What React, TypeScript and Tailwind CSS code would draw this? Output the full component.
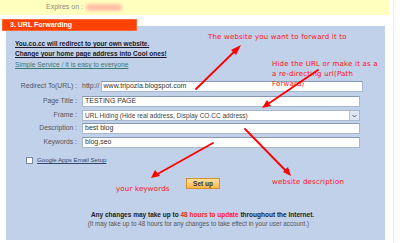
import React from "react";

const ann = "absolute text-[#ff1010] text-[7px] leading-[10px] whitespace-nowrap tracking-[0.2px]";

function Row({ label, children, mt }: { label: string; children: React.ReactNode; mt: string }) {
  return (
    <div className={`flex items-center h-[11px] ${mt}`}>
      <div className="w-[72px] text-right text-[6.8px] text-[#555] pr-[1px]">{label} :</div>
      <div className="ml-[4px] flex items-center">{children}</div>
    </div>
  );
}

function Field({ value, w }: { value: string; w: string }) {
  return (
    <div className={`h-[11px] ${w} bg-white border border-[#a9b7cc] border-t-[#8898b0] flex items-center px-[2px] text-[7px] text-[#333] overflow-hidden whitespace-nowrap`}>
      {value}
    </div>
  );
}

export default function App() {
  return (
    <div
      className="relative w-[400px] h-[243px] bg-white overflow-hidden"
      style={{ fontFamily: '"Liberation Sans", Arial, sans-serif' }}
    >
      <div className="w-[394px] h-[243px] border-r border-[#ececec]">
        {/* Expires bar */}
        <div className="w-[389px] h-[15px] bg-[#ffffbe] flex items-center">
          <span className="ml-[46px] text-[7px] text-[#8a8a8a]">Expires on :</span>
          <span className="ml-[3px] w-[36px] h-[7px] bg-[#ffc0a8] rounded-sm blur-[1.5px]" />
        </div>

        {/* Header */}
        <div className="relative z-10 mt-[4px] ml-[2px] w-[135px] h-[12px] -mb-[5px] bg-[#ff4200] border border-[#ff6a3a] flex items-center">
          <span className="ml-[7px] text-[7px] font-bold text-white">3. URL Forwarding</span>
        </div>

        {/* Blue panel */}
        <div className="relative ml-[6px] w-[379px] h-[214px] bg-[#c1d1ea]">
          <div className="pt-[13px] pl-[9px]">
            <div className="h-[10px] leading-[10px] text-[6.5px] font-bold text-[#1a1a2a] underline">
              You.co.cc will redirect to your own website.
            </div>
            <div className="h-[10px] leading-[10px] text-[6.5px] font-bold text-[#1a1a2a] underline">
              Change your home page address into Cool ones!
            </div>
            <div className="mt-[1px] h-[10px] leading-[10px] text-[6.7px] text-[#3a7a70] underline">
              Simple Service / It is easy to everyone
            </div>
          </div>

          <div>
            <Row label="Redirect To(URL)" mt="mt-[11px]">
              <span className="text-[7px] text-[#555] mr-[1px]">http://</span>
              <Field value="www.tripozia.blogspot.com" w="w-[262px]" />
            </Row>
            <Row label="Page Title" mt="mt-[4px]">
              <Field value="TESTING PAGE" w="w-[278px]" />
            </Row>
            <Row label="Frame" mt="mt-[3px]">
              <div className="h-[11px] w-[278px] bg-white border border-[#a9b7cc] flex items-center text-[6.5px] text-[#444] whitespace-nowrap overflow-hidden">
                <span className="flex-1 px-[2px]">URL Hiding (Hide real address, Display CO.CC address)</span>
                <span className="w-[10px] h-[9px] bg-[#dfe7f5] border-l border-[#b5c3da] flex items-center justify-center">
                  <svg width="5" height="4" viewBox="0 0 5 4">
                    <path d="M0.5 1 L2.5 3 L4.5 1" stroke="#4a5a80" strokeWidth="1" fill="none" />
                  </svg>
                </span>
              </div>
            </Row>
            <Row label="Description" mt="mt-[2px]">
              <Field value="best blog" w="w-[278px]" />
            </Row>
            <Row label="Keywords" mt="mt-[3px]">
              <Field value="blog,seo" w="w-[278px]" />
            </Row>
          </div>

          <div className="mt-[7px] ml-[20px] h-[10px] flex items-center">
            <span className="w-[7px] h-[7px] bg-white border border-[#7a8aa0]" />
            <span className="ml-[4px] text-[6.1px] text-[#33476b] underline">Google Apps Email Setup</span>
          </div>

          <div className="mt-[13px] ml-[180px] w-[34px] h-[11px] bg-gradient-to-b from-[#ffe2a0] to-[#ffb347] border border-[#d4902a] flex items-center justify-center text-[6.5px] font-bold text-[#333]">
            Set up
          </div>

          <div className="mt-[21px] text-center pl-[14px] text-[6.5px] leading-[9px] font-bold text-[#222]">
            Any changes may take up to <span className="text-[#ff2020]">48 hours to update</span> throughout the Internet.
          </div>
          <div className="text-center pl-[6px] text-[6.3px] leading-[9px] text-[#555]">
            (It may take up to 48 hours for any changes to take effect in your user account.)
          </div>

          {/* annotations */}
          <div className={ann} style={{ left: 202, top: 6, fontFamily: '"DejaVu Sans", Verdana, sans-serif' }}>
            The website you want to forward it to
          </div>
          <div className={ann} style={{ left: 266, top: 33, fontFamily: '"DejaVu Sans", Verdana, sans-serif' }}>
            Hide the URL or make it as a<br />a re-directing url(Path<br />Forward)
          </div>
          <div className={ann} style={{ left: 110, top: 158, fontFamily: '"DejaVu Sans", Verdana, sans-serif' }}>
            your keywords
          </div>
          <div className={ann} style={{ left: 266, top: 151, fontFamily: '"DejaVu Sans", Verdana, sans-serif' }}>
            website description
          </div>
        </div>
      </div>

      {/* arrows */}
      <svg className="absolute inset-0 pointer-events-none" width="400" height="243" viewBox="0 0 400 243">
        <g stroke="#ff0000" strokeWidth="1.8" strokeLinecap="round">
          <line x1="196" y1="89" x2="238" y2="48" />
          <line x1="318" y1="70" x2="265" y2="106" />
          <line x1="213" y1="143" x2="154" y2="176" />
          <line x1="245" y1="129" x2="288" y2="173" />
        </g>
        <g fill="#ff0000">
          <polygon points="241,45 231,50 236,55" />
          <polygon points="262,108 267,100 271,106" />
          <polygon points="151,178 155,170 160,176" />
          <polygon points="291,176 283,172 288,167" />
        </g>
      </svg>
    </div>
  );
}
